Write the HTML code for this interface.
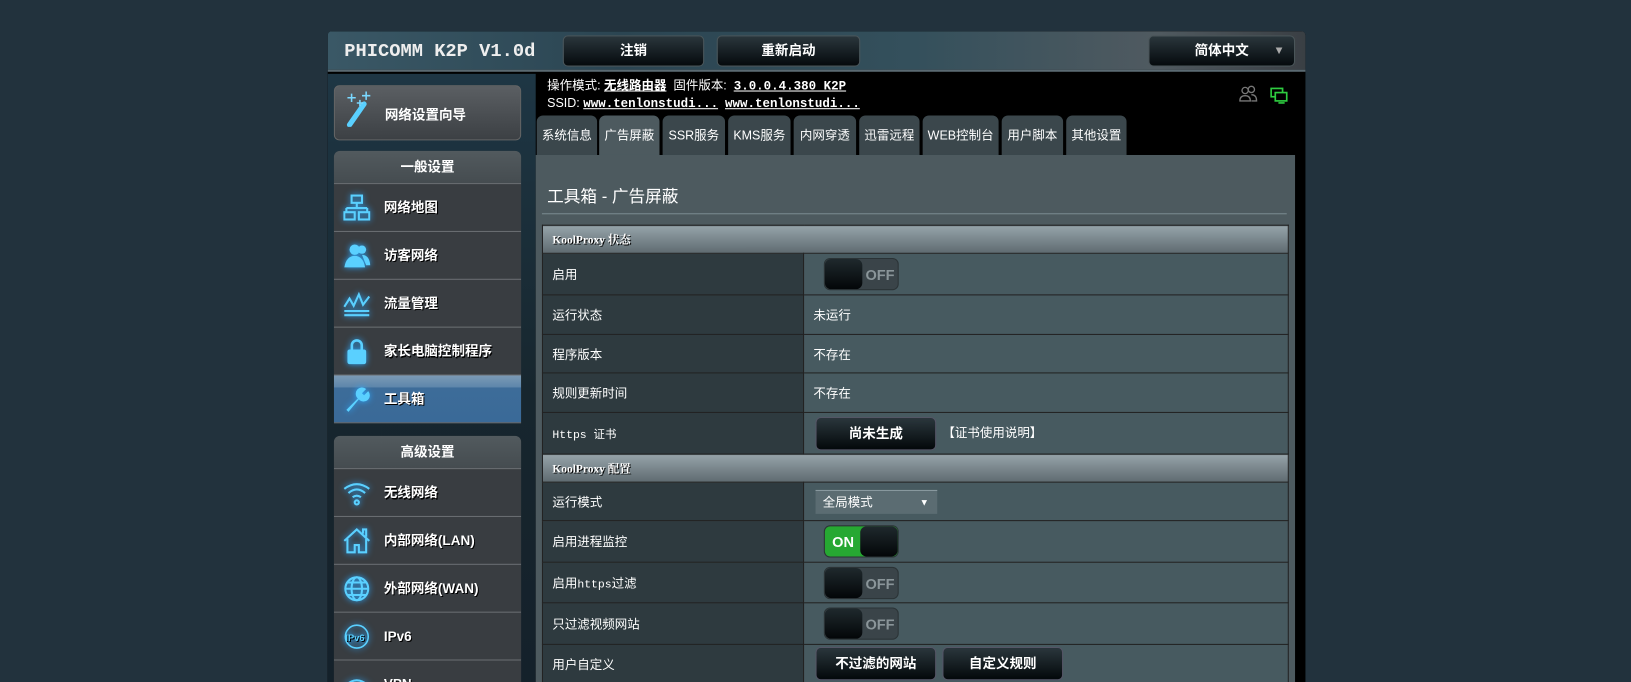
<!DOCTYPE html>
<html><head><meta charset="utf-8"><style>
*{box-sizing:border-box;margin:0;padding:0}
body{width:1631px;height:682px;overflow:hidden;background:#22323d;font-family:"Liberation Sans","Noto Sans CJK SC","WenQuanYi Zen Hei",sans-serif;color:#fff;font-size:12px;position:relative}
.root{position:absolute;left:0;top:0;width:1568px;height:656px;overflow:hidden;transform:scale(1.0402);transform-origin:0 0}
.abs{position:absolute}
.wrap{left:315px;top:30px;width:940px;height:626px;background:#000;border-radius:4px 4px 0 0;overflow:hidden}
.hdr{left:0;top:0;width:940px;height:39px;background:linear-gradient(90deg,#3a5866 0%,#2b4552 30%,#34505c 60%,#505a60 85%,#3a3f44 100%);border-bottom:2px solid #5a6a72}
.logo{left:16px;top:10px;font-size:18px;font-weight:bold;color:#eee;font-family:"Liberation Mono",monospace}
.tbtn{background:linear-gradient(#2a363c,#050a0d);border:1px solid #4a5559;border-radius:5px;font-weight:bold;font-size:13px;text-align:center;line-height:28px}
.side{left:0;top:41px;width:200px;height:620px;background:linear-gradient(180deg,#1e3644,#17262e 50%,#14202a)}
.wiz{left:6px;top:11px;width:180px;height:53px;border-radius:5px;background:linear-gradient(#5b5f63,#3c4044);border:1px solid #666;font-weight:bold;font-size:13px}
.grp{left:6px;width:180px;background:#393d41;border-radius:6px 6px 0 0;overflow:hidden}
.gh{height:32px;line-height:32px;text-align:center;background:linear-gradient(#525a5e,#454c50);font-weight:bold;font-size:13px;border-bottom:1px solid #6a6e72}
.it{height:46px;border-bottom:1px solid #6a6e72;position:relative;font-weight:bold;font-size:13px;line-height:46px;padding-left:48px;text-shadow:1px 1px 0 #000}
.it.sel{background:linear-gradient(#7b9ab5 0,#5d86ab 25%,#3d6c99 26%,#3a6a98);}
.ic{position:absolute;left:9px;top:10px;width:26px;height:26px;color:#5ad0ff;filter:drop-shadow(0 0 3px #2aa8ff)}
.info{left:211px;font-size:12px;color:#fff}
.info b{text-decoration:underline;font-family:"Liberation Mono","Noto Sans CJK SC",monospace}
.tab{top:81px;height:38px;background:#3b474c;border-radius:6px 6px 0 0;line-height:38px;text-align:center;font-size:12px;color:#fff}
.tab.act{background:#4d5a5f}
.panel{left:200px;top:119px;width:730px;height:560px;background:#4d5a5f}
.title{left:11px;top:26px;font-size:16px;color:#fff}
.line{left:6px;top:56px;width:716px;height:1px;background:#7a8a90}
table{position:absolute;left:6px;top:67px;width:718px;border-collapse:collapse}
td{border:1px solid #222;height:37px;padding-left:9px;font-size:12px}
td.l{width:251px;background:#2e3a3f}
td.r{background:#475a60}
tr.h td{height:27px;background:linear-gradient(#95a2a8,#5e6b71);font-weight:bold;font-family:"Liberation Serif","Noto Serif CJK SC",serif;font-size:11px;text-shadow:1px 1px 0 #000}
.sw{display:inline-block;width:72px;height:31px;border-radius:6px;background:#3a4449;border:1px solid #2b3336;position:relative;margin-left:10px;vertical-align:middle}
.sw .k{position:absolute;left:0;top:0;width:36px;height:29px;border-radius:6px;background:linear-gradient(#1f292d,#030608)}
.sw .t{position:absolute;left:39px;top:7px;font-weight:bold;font-size:14px;color:#8a9599}
.sw.on{background:#26a832}
.sw.on .k{left:34px}
.sw.on .t{left:7px;color:#fff}
.btn{display:inline-block;width:116px;height:32px;border-radius:5px;background:linear-gradient(#2a363c,#03080a);border:1px solid #556;text-align:center;line-height:30px;font-weight:bold;font-size:13px;vertical-align:middle;margin-right:6px}
.sel2{display:inline-block;width:117px;height:23px;background:#5b6c72;border-top:1px solid #8a9aa0;padding-left:7px;line-height:22px;font-size:12px;position:relative}
</style></head><body>
<div class="root">
<div class="abs wrap">
 <div class="abs hdr">
  <div class="abs logo">PHICOMM K2P V1.0d</div>
  <div class="abs tbtn" style="left:226px;top:4px;width:136px;height:30px">注销</div>
  <div class="abs tbtn" style="left:374px;top:4px;width:138px;height:30px">重新启动</div>
  <div class="abs tbtn" style="left:789px;top:4px;width:141px;height:30px">简体中文 <span style="position:absolute;right:9px;top:0;font-size:11px;color:#aaa">▼</span></div>
 </div>
 <div class="abs side">
  <div class="abs wiz"><svg class="abs" style="left:8px;top:3px" width="34" height="36" viewBox="0 0 34 36"><path d="M6 34 L20 14" stroke="#5ad0ff" stroke-width="5" stroke-linecap="round"/><path d="M8 4v8M4 8h8M22 2v8M18 6h8M16 10v6M13 13h6" stroke="#7ad8ff" stroke-width="1.5"/></svg><span class="abs" style="left:48px;top:17px">网络设置向导</span></div>
  <div class="abs grp" style="top:74px">
   <div class="gh">一般设置</div>
   <div class="it"><svg class="ic" viewBox="0 0 26 26" fill="none" stroke="currentColor" stroke-width="2"><rect x="8" y="1" width="10" height="7"/><path d="M13 8v5M3 13h20M3 13v4M23 13v4"/><rect x="1" y="17" width="10" height="7"/><rect x="15" y="17" width="10" height="7"/></svg>网络地图</div>
   <div class="it"><svg class="ic" viewBox="0 0 26 26" fill="currentColor"><circle cx="11" cy="7" r="5"/><circle cx="18" cy="7" r="4"/><path d="M1 24 Q3 13 11 13 Q19 13 21 24Z"/><path d="M18 12 Q25 12 26 22 H22Z"/></svg>访客网络</div>
   <div class="it"><svg class="ic" viewBox="0 0 26 26" fill="none" stroke="currentColor" stroke-width="2"><path d="M1 16 L6 8 L10 15 L15 4 L19 14 L25 6"/><path d="M1 20h24M1 24h24"/></svg>流量管理</div>
   <div class="it"><svg class="ic" viewBox="0 0 26 26" fill="currentColor"><path d="M7 11V7a6 6 0 0112 0v4h-2.5V7a3.5 3.5 0 00-7 0v4z"/><rect x="4" y="11" width="18" height="14" rx="2"/></svg>家长电脑控制程序</div>
   <div class="it sel"><svg class="ic" viewBox="0 0 26 26" fill="currentColor"><path d="M3 23 L14 12 A6 6 0 0 1 22 3 L18 7 L20 9 L24 5 A6 6 0 0 1 15 13 L5 25Z"/></svg>工具箱</div>
  </div>
  <div class="abs grp" style="top:348px;height:280px">
   <div class="gh">高级设置</div>
   <div class="it"><svg class="ic" viewBox="0 0 26 26" fill="none" stroke="currentColor" stroke-width="2"><path d="M1 9 Q13 0 25 9M5 13 Q13 6 21 13M9 17 Q13 14 17 17"/><circle cx="13" cy="22" r="2"/></svg>无线网络</div>
   <div class="it"><svg class="ic" viewBox="0 0 26 26" fill="none" stroke="currentColor" stroke-width="2"><path d="M1 13 L13 2 L25 13M4 11v13h7v-7h4v7h7V11M19 6V2h3v7"/></svg>内部网络(LAN)</div>
   <div class="it"><svg class="ic" viewBox="0 0 26 26" fill="none" stroke="currentColor" stroke-width="2"><circle cx="13" cy="13" r="11"/><ellipse cx="13" cy="13" rx="5" ry="11"/><path d="M2 13h22M4 7h18M4 19h18"/></svg>外部网络(WAN)</div>
   <div class="it"><svg class="ic" viewBox="0 0 26 26" fill="none" stroke="currentColor" stroke-width="1.5"><circle cx="13" cy="13" r="11"/><text x="2" y="17" font-size="9" fill="currentColor" stroke="none" font-family="Liberation Sans">IPv6</text></svg>IPv6</div>
   <div class="it"><svg class="ic" viewBox="0 0 26 26" fill="none" stroke="currentColor" stroke-width="2"><path d="M2 14 Q13 4 24 14"/></svg>VPN</div>
  </div>
 </div>
 <div class="abs info" style="top:43px">操作模式: <b>无线路由器</b> &nbsp;固件版本: &nbsp;<b>3.0.0.4.380_K2P</b></div>
 <div class="abs info" style="top:62px">SSID: <b>www.tenlonstudi...</b> &nbsp;<b>www.tenlonstudi...</b></div>
 <svg class="abs" style="left:876px;top:52px" width="18" height="16" viewBox="0 0 18 16" fill="none" stroke="#777" stroke-width="1.3"><circle cx="6" cy="5" r="3"/><path d="M1 15q0-5 5-5t5 5z"/><circle cx="12" cy="4" r="3"/><path d="M12 9q5 0 5 6h-5"/></svg>
 <svg class="abs" style="left:906px;top:54px" width="18" height="16" viewBox="0 0 18 16" fill="none" stroke="#2ecc40" stroke-width="1.6"><rect x="1" y="1" width="11" height="8"/><rect x="5" y="5" width="11" height="8" fill="#000"/><path d="M8 15h6"/></svg>
 <div class="abs tab" style="left:201px;width:58px">系统信息</div>
 <div class="abs tab act" style="left:261px;width:58px">广告屏蔽</div>
 <div class="abs tab" style="left:322px;width:60px">SSR服务</div>
 <div class="abs tab" style="left:385px;width:60px">KMS服务</div>
 <div class="abs tab" style="left:448px;width:60px">内网穿透</div>
 <div class="abs tab" style="left:511px;width:58px">迅雷远程</div>
 <div class="abs tab" style="left:572px;width:73px">WEB控制台</div>
 <div class="abs tab" style="left:648px;width:59px">用户脚本</div>
 <div class="abs tab" style="left:710px;width:58px">其他设置</div>
 <div class="abs panel">
  <div class="abs title">工具箱 - 广告屏蔽</div>
  <div class="abs line"></div>
  <table>
   <tr class="h"><td colspan="2">KoolProxy 状态</td></tr>
   <tr><td class="l" style="height:40px">启用</td><td class="r"><span class="sw"><span class="k"></span><span class="t">OFF</span></span></td></tr>
   <tr><td class="l" style="height:38px">运行状态</td><td class="r">未运行</td></tr>
   <tr><td class="l">程序版本</td><td class="r">不存在</td></tr>
   <tr><td class="l" style="height:38px">规则更新时间</td><td class="r">不存在</td></tr>
   <tr><td class="l" style="height:40px"><span style="font-family:'Liberation Mono','Noto Sans CJK SC',monospace;font-size:11px">Https 证书</span></td><td class="r"><span class="btn" style="margin-left:2px">尚未生成</span>【证书使用说明】</td></tr>
   <tr class="h"><td colspan="2">KoolProxy 配置</td></tr>
   <tr><td class="l" style="height:37px">运行模式</td><td class="r"><span class="sel2" style="margin-left:2px">全局模式<span style="position:absolute;right:8px;top:0;font-size:9px">▼</span></span></td></tr>
   <tr><td class="l" style="height:40px">启用进程监控</td><td class="r"><span class="sw on"><span class="k"></span><span class="t">ON</span></span></td></tr>
   <tr><td class="l" style="height:39px">启用<span style="font-family:'Liberation Mono',monospace;font-size:11px">https</span>过滤</td><td class="r"><span class="sw"><span class="k"></span><span class="t">OFF</span></span></td></tr>
   <tr><td class="l" style="height:40px">只过滤视频网站</td><td class="r"><span class="sw"><span class="k"></span><span class="t">OFF</span></span></td></tr>
   <tr><td class="l" style="height:60px;vertical-align:top;padding-top:10px">用户自定义</td><td class="r" style="vertical-align:top;padding-top:2px"><span class="btn" style="margin-left:2px">不过滤的网站</span><span class="btn">自定义规则</span></td></tr>
  </table>
 </div>
</div>
</div>
</body></html>
